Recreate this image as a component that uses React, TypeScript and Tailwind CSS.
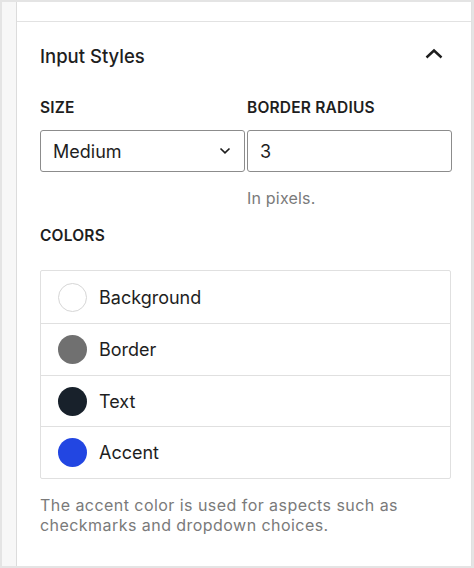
import React from "react";

const colors = [
  { name: "Background", cls: "bg-white border border-[#d6d6d6]", h: "h-[52px]" },
  { name: "Border", cls: "bg-[#707070]", h: "h-[52px]" },
  { name: "Text", cls: "bg-[#18212b]", h: "h-[51px]" },
  { name: "Accent", cls: "bg-[#2246e2]", h: "h-[52px]" },
];

export default function App() {
  return (
    <div
      className="w-[474px] h-[568px] bg-[#e4e4e4] p-[2px] overflow-hidden text-[#1e1e1e]"
      style={{ fontFamily: "Inter, 'Noto Sans', sans-serif" }}
    >
      <div className="flex h-full bg-white">
        <div className="w-[15px] bg-[#f7f7f7] border-r border-[#dcdcdc]" />
        <div className="flex-1 flex flex-col border-r border-[#e0e0e0]">
          <div className="h-[20px] border-b border-[#e2e2e2]" />
          <div className="flex-1 pl-[23px] pr-[19px]">
            <div className="flex items-center justify-between h-[68px] pt-[2px]">
              <div className="text-[18.5px] font-medium">Input Styles</div>
              <svg width="18" height="12" viewBox="0 0 18 12" className="mr-[9px] mt-[-6px]">
                <path d="M1.5 9.5 L9 2.5 L16.5 9.5" fill="none" stroke="#1e1e1e" strokeWidth="2.4" />
              </svg>
            </div>
            <div className="grid grid-cols-2 gap-x-[2px]">
              <div>
                <div className="mt-[8px] text-[15.5px] leading-[20px] font-semibold uppercase tracking-[0.2px]">Size</div>
                <div className="mt-[12px] h-[42px] border border-[#8c8c8c] rounded-[3px] flex items-center justify-between pl-[12px] pr-[13px]">
                  <span className="text-[18px]">Medium</span>
                  <svg width="12" height="8" viewBox="0 0 12 8">
                    <path d="M1.5 1.5 L6 5.8 L10.5 1.5" fill="none" stroke="#1e1e1e" strokeWidth="1.7" />
                  </svg>
                </div>
              </div>
              <div>
                <div className="mt-[8px] text-[15.5px] leading-[20px] font-semibold uppercase tracking-[0.2px]">Border radius</div>
                <div className="mt-[12px] h-[42px] border border-[#8c8c8c] rounded-[3px] flex items-center pl-[12px]">
                  <span className="text-[18px]">3</span>
                </div>
                <div className="mt-[16px] text-[16px] leading-[20px] tracking-[0.2px] text-[#7a7a7a]">In pixels.</div>
              </div>
            </div>
            <div className="mt-[18px] text-[15.5px] leading-[20px] font-semibold uppercase tracking-[0.2px]">Colors</div>
            <div className="mt-[24px] mr-[1px] border border-[#e0e0e0] rounded-[2px]">
              {colors.map((c, i) => (
                <div
                  key={c.name}
                  className={`flex items-center ${c.h} pl-[17px] ${i > 0 ? "border-t border-[#e0e0e0]" : ""}`}
                >
                  <div className={`w-[29px] h-[29px] rounded-full ${c.cls}`} />
                  <span className="ml-[12px] text-[18px]">{c.name}</span>
                </div>
              ))}
            </div>
            <div className="mt-[16px] text-[16px] leading-[20px] tracking-[0.45px] text-[#7a7a7a]">
              The accent color is used for aspects such as checkmarks and dropdown choices.
            </div>
          </div>
        </div>
      </div>
    </div>
  );
}
